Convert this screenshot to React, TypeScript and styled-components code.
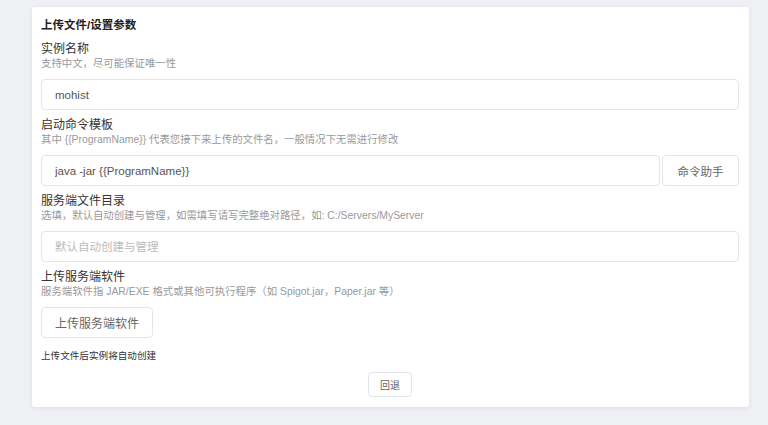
import styled, { createGlobalStyle } from 'styled-components'

const GlobalStyle = createGlobalStyle`
    html, body {
        margin: 0;
        padding: 0;
        background: #eef0f4;
        font-family: "Liberation Sans", "Noto Sans CJK SC", sans-serif;
    }
    * {
        box-sizing: border-box;
    }
`

const Page = styled.div`
    padding: 7px 19px 18px 32px;
`

const Card = styled.div`
    background: #fff;
    border-radius: 3px;
    box-shadow: 0 1px 4px rgba(0, 0, 0, 0.08);
    padding: 10px 10px 10px 9px;
    display: flex;
    flex-direction: column;
`

const Title = styled.div`
    font-size: 11.5px;
    line-height: 16px;
    font-weight: bold;
    color: #222;
    margin-bottom: 8px;
`

const Field = styled.div`
    display: flex;
    flex-direction: column;
    margin-bottom: 7px;
`

const Label = styled.div`
    font-size: 12px;
    line-height: 16px;
    color: #333;
`

const Hint = styled.div`
    font-size: 10.4px;
    line-height: 14px;
    color: #999;
    margin-bottom: 8px;
`

const InputRow = styled.div`
    display: flex;
    gap: 2px;
`

const Input = styled.input`
    flex: 1 1 auto;
    min-width: 0;
    height: 31px;
    border: 1px solid #e3e5ea;
    border-radius: 4px;
    padding: 0 13px;
    font-family: inherit;
    font-size: 11.5px;
    color: #555;
    outline: none;
    &::placeholder {
        color: #bbb;
    }
`

const Button = styled.button<{ w: number; h: number; fs: number }>`
    width: ${(p) => p.w}px;
    height: ${(p) => p.h}px;
    flex-shrink: 0;
    background: #fff;
    border: 1px solid #e3e5ea;
    border-radius: 4px;
    font-family: inherit;
    font-size: ${(p) => p.fs}px;
    color: #666;
    padding: 0;
    cursor: pointer;
`

const Note = styled.div`
    font-size: 9.6px;
    line-height: 14px;
    color: #333;
    margin-top: 4px;
    margin-bottom: 9px;
`

const Footer = styled.div`
    display: flex;
    justify-content: center;
`

export default function App() {
    return (
        <>
            <GlobalStyle />
            <Page>
                <Card>
                    <Title>上传文件/设置参数</Title>
                    <Field>
                        <Label>实例名称</Label>
                        <Hint>支持中文，尽可能保证唯一性</Hint>
                        <Input defaultValue="mohist" />
                    </Field>
                    <Field>
                        <Label>启动命令模板</Label>
                        <Hint>其中 {'{{ProgramName}}'} 代表您接下来上传的文件名，一般情况下无需进行修改</Hint>
                        <InputRow>
                            <Input defaultValue="java -jar {{ProgramName}}" />
                            <Button w={77} h={31} fs={11.5}>命令助手</Button>
                        </InputRow>
                    </Field>
                    <Field>
                        <Label>服务端文件目录</Label>
                        <Hint>选填，默认自动创建与管理，如需填写请写完整绝对路径，如: C:/Servers/MyServer</Hint>
                        <Input placeholder="默认自动创建与管理" />
                    </Field>
                    <Field>
                        <Label>上传服务端软件</Label>
                        <Hint>服务端软件指 JAR/EXE 格式或其他可执行程序（如 Spigot.jar，Paper.jar 等）</Hint>
                        <div>
                            <Button w={112} h={31} fs={12}>上传服务端软件</Button>
                        </div>
                    </Field>
                    <Note>上传文件后实例将自动创建</Note>
                    <Footer>
                        <Button w={44} h={25} fs={10}>回退</Button>
                    </Footer>
                </Card>
            </Page>
        </>
    )
}
